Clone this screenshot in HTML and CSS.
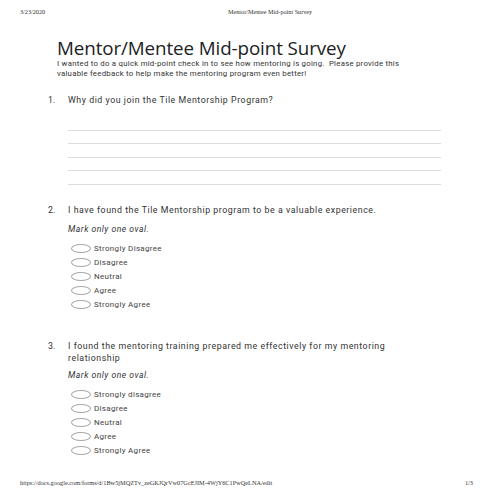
FILE: index.html
```html
<!DOCTYPE html>
<html>
<head>
    <title>Mentor/Mentee Mid-point Survey</title>
    <link rel="stylesheet" href="styles.css">
</head>
<body>
    <div class="page">
        <!-- Print header -->
        <header class="print-header">
            <span class="print-date">3/23/2020</span>
            <span class="print-title">Mentor/Mentee Mid-point Survey</span>
        </header>

        <main class="form">
            <div class="form-intro">
                <h1>Mentor/Mentee Mid-point Survey</h1>
                <p>I wanted to do a quick mid-point check in to see how mentoring is going.&nbsp; Please provide this valuable feedback to help make the mentoring program even better!</p>
            </div>

            <section class="question">
                <div class="question-title">
                    <span class="num">1.</span>
                    <span class="text">Why did you join the Tile Mentorship Program?</span>
                </div>
                <div class="answer-lines">
                    <div class="line"></div>
                    <div class="line"></div>
                    <div class="line"></div>
                    <div class="line"></div>
                    <div class="line"></div>
                </div>
            </section>

            <section class="question q2">
                <div class="question-title">
                    <span class="num">2.</span>
                    <span class="text">I have found the Tile Mentorship program to be a valuable experience.</span>
                </div>
                <p class="hint">Mark only one oval.</p>
                <ul class="options">
                    <li><span class="oval"></span>Strongly Disagree</li>
                    <li><span class="oval"></span>Disagree</li>
                    <li><span class="oval"></span>Neutral</li>
                    <li><span class="oval"></span>Agree</li>
                    <li><span class="oval"></span>Strongly Agree</li>
                </ul>
            </section>

            <section class="question q3">
                <div class="question-title">
                    <span class="num">3.</span>
                    <span class="text">I found the mentoring training prepared me effectively for my mentoring relationship</span>
                </div>
                <p class="hint">Mark only one oval.</p>
                <ul class="options">
                    <li><span class="oval"></span>Strongly disagree</li>
                    <li><span class="oval"></span>Disagree</li>
                    <li><span class="oval"></span>Neutral</li>
                    <li><span class="oval"></span>Agree</li>
                    <li><span class="oval"></span>Strongly Agree</li>
                </ul>
            </section>
        </main>

        <!-- Print footer -->
        <footer class="print-footer">
            <span>https://docs.google.com/forms/d/1Bw5jMQZTv_zeGKJQrVw07GcEJIM-4WjY6C1PwQeLNA/edit</span>
            <span>1/3</span>
        </footer>
    </div>
</body>
</html>
```

FILE: styles.css
```css
* {
    margin: 0;
    padding: 0;
    box-sizing: border-box;
}

body {
    background: white;
    color: #202124;
    font-family: Roboto, 'Liberation Sans', sans-serif;
}

.page {
    width: 495px;
    height: 495px;
    display: flex;
    flex-direction: column;
    overflow: hidden;
}

/* Print header / footer */
.print-header,
.print-footer {
    display: flex;
    align-items: center;
    font-family: 'Liberation Serif', serif;
    color: #333;
    padding: 0 22px 0 20px;
}

.print-header {
    height: 22px;
    font-size: 6.2px;
}

.print-date {
    width: 208px;
}

.print-footer {
    justify-content: space-between;
    margin-top: auto;
    height: 24px;
    padding-bottom: 1px;
    font-size: 6.3px;
}

/* Form */
.form {
    padding: 14px 54px 0 48px;
}

.form-intro {
    padding-left: 9px;
}

.form-intro h1 {
    font-family: 'Open Sans', sans-serif;
    font-size: 18.8px;
    font-weight: 400;
    line-height: 24px;
    letter-spacing: -0.1px;
}

.form-intro p {
    max-width: 362px;
    font-size: 7.8px;
    line-height: 10px;
    letter-spacing: 0.25px;
    color: #333;
    margin-top: -1px;
}

.question {
    margin-top: 15px;
}

.question-title {
    display: flex;
    font-size: 8.8px;
    line-height: 12px;
    letter-spacing: 0.54px;
    color: #333;
}

.question-title .num {
    width: 20px;
    flex-shrink: 0;
    letter-spacing: 0;
}

.question-title .text {
    max-width: 340px;
}

.answer-lines {
    margin-left: 20px;
    padding-top: 11px;
}

.answer-lines .line {
    border-bottom: 1px solid #dcdcdc;
    height: 13.6px;
}

.q2 {
    margin-top: 19px;
}

.q3 {
    margin-top: 28px;
}

.hint {
    margin: 7px 0 0 20px;
    font-size: 8.6px;
    line-height: 12px;
    letter-spacing: 0.5px;
    font-style: italic;
    color: #333;
}

.q3 .hint {
    margin-top: 5px;
}

.options {
    list-style: none;
    margin: 7px 0 0 23px;
}

.options li {
    display: flex;
    align-items: center;
    gap: 3px;
    height: 14px;
    font-size: 8px;
    letter-spacing: 0.32px;
    color: #444;
}

.oval {
    width: 20px;
    height: 9px;
    border: 1px solid #a8a8a8;
    border-radius: 50%;
}
```
